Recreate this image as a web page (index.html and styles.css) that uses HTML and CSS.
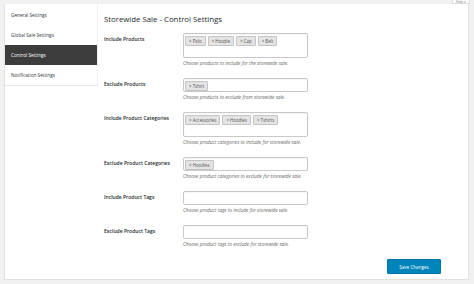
FILE: index.html
```html
<!DOCTYPE html>
<html lang="en">
<head>
    <meta charset="UTF-8">
    <title>Storewide Sale - Control Settings</title>
    <link rel="stylesheet" href="styles.css">
</head>
<body>
    <div class="screen-meta">
        <span class="help-tab">Help &#9662;</span>
    </div>

    <div class="panel">
        <ul class="side-nav">
            <li>General Settings</li>
            <li>Global Sale Settings</li>
            <li class="active">Control Settings</li>
            <li>Notification Settings</li>
        </ul>

        <div class="main">
            <h1>Storewide Sale - Control Settings</h1>

            <div class="row">
                <label>Include Products</label>
                <div class="field">
                    <div class="select tall">
                        <span class="tag">&times; Polo</span>
                        <span class="tag">&times; Hoodie</span>
                        <span class="tag">&times; Cap</span>
                        <span class="tag">&times; Belt</span>
                    </div>
                    <p class="hint">Choose products to include for the storewide sale.</p>
                </div>
            </div>

            <div class="row">
                <label>Exclude Products</label>
                <div class="field">
                    <div class="select">
                        <span class="tag">&times; Tshirt</span>
                    </div>
                    <p class="hint">Choose products to exclude from storewide sale.</p>
                </div>
            </div>

            <div class="row">
                <label>Include Product Categories</label>
                <div class="field">
                    <div class="select tall">
                        <span class="tag">&times; Accessories</span>
                        <span class="tag">&times; Hoodies</span>
                        <span class="tag">&times; Tshirts</span>
                    </div>
                    <p class="hint">Choose product categories to include for storewide sale.</p>
                </div>
            </div>

            <div class="row">
                <label>Exclude Product Categories</label>
                <div class="field">
                    <div class="select">
                        <span class="tag">&times; Hoodies</span>
                    </div>
                    <p class="hint">Choose product categories to exclude for storewide sale.</p>
                </div>
            </div>

            <div class="row">
                <label>Include Product Tags</label>
                <div class="field">
                    <div class="select"></div>
                    <p class="hint">Choose product tags to include for storewide sale.</p>
                </div>
            </div>

            <div class="row">
                <label>Exclude Product Tags</label>
                <div class="field">
                    <div class="select"></div>
                    <p class="hint">Choose product tags to exclude for storewide sale.</p>
                </div>
            </div>

            <div class="actions">
                <button class="save-btn">Save Changes</button>
            </div>
        </div>
    </div>
</body>
</html>
```

FILE: styles.css
```css
body {
    font-family: 'Open Sans', sans-serif;
    margin: 0;
    padding: 0;
    background-color: #f1f1f1;
    color: #23282d;
}

.screen-meta {
    height: 4px;
    display: flex;
    justify-content: flex-end;
    padding-right: 4px;
}

.help-tab {
    display: block;
    height: 4px;
    padding: 0 3px;
    background: #fff;
    border: 1px solid #ddd;
    border-top: none;
    box-sizing: border-box;
    font-size: 3.4px;
    line-height: 3px;
    color: #72777c;
}

.panel {
    display: flex;
    height: 276px;
    margin: 0 5px 0 4px;
    background: #fff;
    border-left: 1px solid #e2e2e2;
    border-right: 1px solid #e2e2e2;
    border-bottom: 1px solid #e2e2e2;
    box-sizing: border-box;
}

.side-nav {
    list-style: none;
    margin: 0;
    padding: 1px 0 0;
    width: 92px;
    height: 80px;
    border-bottom: 1px solid #e5e5e5;
    border-right: 1px solid #f0f0f0;
}

.side-nav li {
    height: 20px;
    line-height: 20px;
    padding-left: 6px;
    font-size: 4.7px;
    color: #32373c;
}

.side-nav li.active {
    background: #3c3c3c;
    color: #fff;
}

.main {
    flex: 1;
    display: flex;
    flex-direction: column;
    padding: 0 0 0 6px;
}

h1 {
    margin: 8px 0 7px;
    font-size: 7.8px;
    line-height: 14px;
    font-weight: 400;
    color: #23282d;
}

.row {
    display: flex;
    margin-bottom: 10px;
}

.row label {
    width: 79px;
    font-size: 5px;
    line-height: 12px;
    font-weight: 600;
    color: #23282d;
}

.field {
    width: 125px;
}

.select {
    box-sizing: border-box;
    height: 14px;
    padding: 2px 1px;
    display: flex;
    flex-wrap: wrap;
    align-content: flex-start;
    gap: 2px;
    border: 1px solid #c8c8c8;
    border-radius: 2px;
    box-shadow: inset 0 1px 1px rgba(0, 0, 0, 0.04);
}

.select.tall {
    height: 25px;
}

.tag {
    height: 8px;
    line-height: 8px;
    padding: 0 3px;
    background: #e4e4e4;
    border: 1px solid #c4c4c4;
    border-radius: 1px;
    font-size: 4.4px;
    color: #555;
}

.hint {
    margin: 1px 0 0;
    font-size: 4.8px;
    line-height: 9px;
    font-style: italic;
    color: #666;
}

.actions {
    margin-top: auto;
    display: flex;
    justify-content: flex-end;
    padding: 0 27px 5px 0;
}

.save-btn {
    width: 54px;
    height: 15px;
    padding: 0;
    background-color: #0085ba;
    border: 1px solid #0073aa;
    border-radius: 1px;
    color: #fff;
    font-family: 'Open Sans', sans-serif;
    font-size: 4.6px;
}
```
